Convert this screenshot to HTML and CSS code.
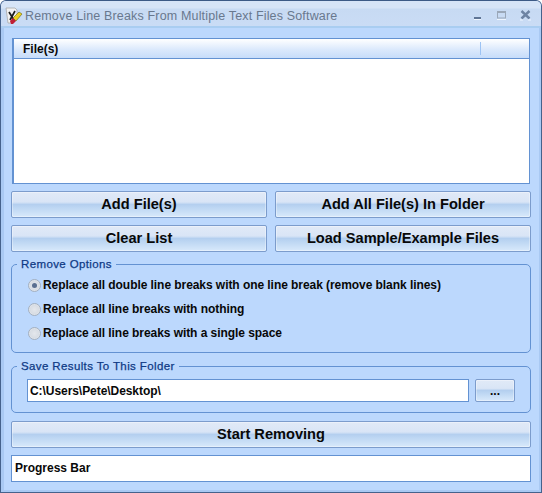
FILE: index.html
```html
<!DOCTYPE html>
<html lang="en">
<head>
<meta charset="utf-8">
<title>Remove Line Breaks From Multiple Text Files Software</title>
<link rel="stylesheet" href="styles.css">
</head>
<body>
<div class="window">
  <header class="titlebar">
    <svg class="app-icon" width="18" height="18" viewBox="0 0 18 18">
      <path d="M1 1h9l2 2v6l-4 7H3z" fill="#f2f2f2" stroke="#a8a8a8" stroke-width=".8"/>
      <path d="M4 5l5 8M10 4l-5 9" stroke="#1e1e1e" stroke-width="1.700" fill="none"/>
      <path d="M8 11l6-6 3 2-6 7z" fill="#eed21e" stroke="#77741f" stroke-width=".7"/>
      <path d="M5 14l3-3 3 3-3 3H6z" fill="#c01f35"/>
    </svg>
    <span class="title">Remove Line Breaks From Multiple Text Files Software</span>
    <div class="controls">
      <svg width="11" height="11" viewBox="0 0 11 11"><rect x="2" y="7" width="7" height="2" fill="#5f7595"/><rect x="2" y="9" width="7" height="1" fill="#eef5ff"/></svg>
      <svg width="11" height="11" viewBox="0 0 11 11"><rect x="1.500" y="1.500" width="8" height="6.500" fill="none" stroke="#9aa7b8"/><rect x="1" y="1" width="9" height="2" fill="#9aa7b8"/><rect x="1" y="9" width="9" height="1" fill="#eef5ff"/></svg>
      <svg width="11" height="11" viewBox="0 0 11 11"><path d="M1.500 1l8 7.500M9.500 1l-8 7.500" stroke="#6d83a3" stroke-width="2.400" fill="none"/><path d="M0 10h3M8 10h3" stroke="#eef5ff"/></svg>
    </div>
  </header>
  <main class="client">
    <section class="list">
      <div class="list-head"><span class="col-name">File(s)</span><span class="col-rest"></span></div>
      <div class="list-body"></div>
    </section>
    <div class="button-grid">
      <button class="btn" type="button">Add File(s)</button>
      <button class="btn" type="button">Add All File(s) In Folder</button>
      <button class="btn" type="button">Clear List</button>
      <button class="btn" type="button">Load Sample/Example Files</button>
    </div>
    <fieldset class="group options">
      <legend>Remove Options</legend>
      <label class="radio"><span class="dot on"></span>Replace all double line breaks with one line break (remove blank lines)</label>
      <label class="radio"><span class="dot"></span>Replace all line breaks with nothing</label>
      <label class="radio"><span class="dot"></span>Replace all line breaks with a single space</label>
    </fieldset>
    <fieldset class="group folder">
      <legend>Save Results To This Folder</legend>
      <div class="folder-row">
        <div class="path">C:\Users\Pete\Desktop\</div>
        <button class="btn browse" type="button">...</button>
      </div>
    </fieldset>
    <button class="btn start" type="button">Start Removing</button>
    <div class="progress">Progress Bar</div>
  </main>
</div>
</body>
</html>
```

FILE: styles.css
```css
* { box-sizing: border-box; }
html, body { margin: 0; padding: 0; }
body { font-family: "Liberation Sans", Arial, sans-serif; }
.window {
  width: 542px; height: 493px;
  display: flex; flex-direction: column;
  background: #bcd8fd;
  border: 1px solid #45628c;
  border-top-color: #3c5a86;
  border-radius: 6px 6px 0 0;
  overflow: hidden;
}
.titlebar {
  height: 27px; flex: none;
  display: flex; align-items: center;
  padding: 0 4px;
  background: linear-gradient(#d6e4f7 0, #d6e4f7 7px, #c7daf3 8px, #cadcf5 25px, #a9cdf1 25px, #a9cdf1 100%);
}
.app-icon { flex: none; margin-top: 3px; }
.title {
  margin-left: 2px; margin-top: 3px;
  font-family: "Liberation Sans", sans-serif;
  font-size: 12.500px;
  color: #68788e;
  white-space: nowrap;
  letter-spacing: .16px;
}
.controls {
  margin-left: auto; display: flex; gap: 13px; padding-right: 6px; align-items: center; margin-top: 1px;
}
.client {
  flex: 1; min-height: 0;
  display: flex; flex-direction: column;
  padding: 10px 9px 10px 10px;
  box-shadow: inset 3px 0 0 #a9c9f3, inset -2px 0 0 #a9c9f3, inset 0 -2px 0 #a9c9f3;
}
.list {
  margin-left: 1px;
  width: 518px;
  height: 146px; flex: none;
  border: 1px solid #6392d2;
  border-left-width: 2px;
  background: #fff;
  display: flex; flex-direction: column;
}
.list-head {
  height: 20px; flex: none;
  display: flex;
  background: linear-gradient(#ffffff, #dbe9fc 55%, #c6dcfa);
  border-bottom: 1px solid #6392d2;
  font-size: 12px; font-weight: 700; color: #080808;
}
.col-name { flex: 1; padding-left: 9px; line-height: 21px; }
.col-rest { width: 49px; flex: none; margin: 3px 0; border-left: 1px solid #9cc3f4; }
.list-body { flex: 1; }
.btn {
  font-family: "Liberation Sans", Arial, sans-serif;
  font-weight: 700; font-size: 14.600px; color: #080808;
  padding: 0 0 2px;
  border: 1px solid #7c9ccc;
  border-radius: 2px;
  background: linear-gradient(#e1eaf7 0, #d9e5f6 40%, #b4cfef 50%, #bbd5f2 60%, #d8e9fb 100%);
  box-shadow: inset 0 0 0 1px rgba(255,255,255,.35);
}
.button-grid {
  margin-top: 7px;
  display: grid; grid-template-columns: 256px 256px; column-gap: 8px; row-gap: 7px;
  grid-auto-rows: 27px;
  flex: none;
}
.group {
  margin: 0; padding: 0;
  min-width: 0;
  width: 520px;
  border: 1px solid #6392d2;
  border-radius: 5px;
  flex: none;
}
.group legend {
  margin-left: 5px; padding: 0 4px;
  font-size: 11.500px; font-weight: 400;
  color: #0f3a85;
  line-height: 13px;
  -webkit-text-stroke: .25px #0f3a85;
  letter-spacing: .38px;
}
.options { margin-top: 6px; height: 95px; padding-top: 2px; display: flex; flex-direction: column; }
.radio {
  display: flex; align-items: center; height: 24px;
  margin-left: 16px;
  font-size: 12px; font-weight: 700; color: #080808;
  white-space: nowrap; letter-spacing: -.06px;
}
.dot {
  width: 13px; height: 13px; flex: none;
  margin-right: 2px;
  border-radius: 50%;
  border: 1px solid #a4b0bf;
  background: radial-gradient(circle at 50% 50%, #e4e7ec 0, #d8dde4 55%, #f6f8fb 100%);
  display: flex; align-items: center; justify-content: center;
}
.dot.on::after {
  content: ""; width: 5px; height: 5px; border-radius: 50%;
  background: #5a6f90;
}
.folder { margin-top: 7px; height: 53px; }
.folder-row { display: flex; align-items: stretch; height: 23px; margin: 6px 0 0 15px; }
.path {
  width: 442px; flex: none;
  background: #fff;
  border: 1px solid #6392d2;
  font-size: 12px; font-weight: 700; color: #080808;
  line-height: 22px; padding-left: 2px; letter-spacing: -.06px;
}
.browse { width: 40px; flex: none; margin-left: 6px; font-size: 12px; padding: 0; }
.start { margin-top: 8px; height: 27px; width: 520px; flex: none; }
.progress {
  margin-top: 7px; height: 27px; width: 520px; flex: none;
  background: #fff;
  border: 1px solid #6392d2;
  font-size: 12px; font-weight: 700; color: #080808;
  line-height: 25px; padding-left: 3px;
}
```
